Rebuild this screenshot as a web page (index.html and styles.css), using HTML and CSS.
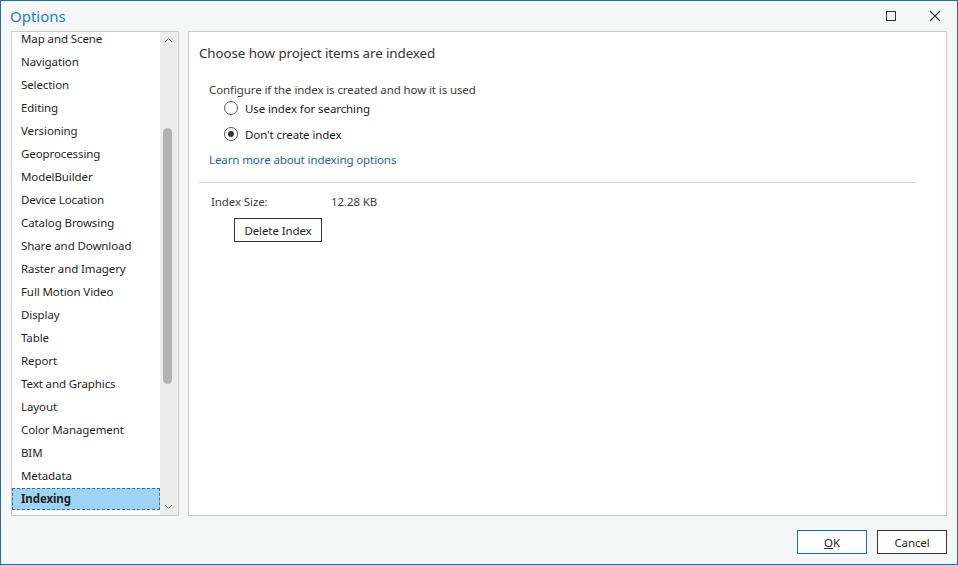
FILE: index.html
```html
<!DOCTYPE html>
<html lang="en">
<head>
    <meta charset="UTF-8">
    <title>Options</title>
    <link rel="stylesheet" href="styles.css">
</head>
<body>
    <div class="dialog">
        <div class="title-bar">
            <div class="title">Options</div>
            <div class="win-btns">
                <span class="win-btn">
                    <svg width="12" height="12" viewBox="0 0 12 12"><rect x="1.5" y="1.5" width="9" height="9" fill="none" stroke="#333" stroke-width="1"/></svg>
                </span>
                <span class="win-btn">
                    <svg width="12" height="12" viewBox="0 0 12 12"><path d="M1 1 L11 11 M11 1 L1 11" stroke="#333" stroke-width="1.1"/></svg>
                </span>
            </div>
        </div>

        <div class="main">
            <div class="side-list">
                <ul class="items">
                    <li>Map and Scene</li>
                    <li>Navigation</li>
                    <li>Selection</li>
                    <li>Editing</li>
                    <li>Versioning</li>
                    <li>Geoprocessing</li>
                    <li>ModelBuilder</li>
                    <li>Device Location</li>
                    <li>Catalog Browsing</li>
                    <li>Share and Download</li>
                    <li>Raster and Imagery</li>
                    <li>Full Motion Video</li>
                    <li>Display</li>
                    <li>Table</li>
                    <li>Report</li>
                    <li>Text and Graphics</li>
                    <li>Layout</li>
                    <li>Color Management</li>
                    <li>BIM</li>
                    <li>Metadata</li>
                    <li class="selected"><span>Indexing</span></li>
                </ul>
                <div class="scrollbar">
                    <svg class="arrow-up" width="9" height="6" viewBox="0 0 9 6"><path d="M1 5 L4.5 1.5 L8 5" fill="none" stroke="#7a7a7a" stroke-width="1"/></svg>
                    <div class="thumb"></div>
                    <svg class="arrow-down" width="9" height="6" viewBox="0 0 9 6"><path d="M1 1 L4.5 4.5 L8 1" fill="none" stroke="#7a7a7a" stroke-width="1"/></svg>
                </div>
            </div>

            <div class="panel">
                <h2>Choose how project items are indexed</h2>
                <div class="group">
                    <div class="group-label">Configure if the index is created and how it is used</div>
                    <label class="radio"><span class="circle"></span>Use index for searching</label>
                    <label class="radio checked"><span class="circle"></span>Don't create index</label>
                    <a class="link" href="#">Learn more about indexing options</a>
                </div>
                <div class="divider"></div>
                <div class="size-row">
                    <span class="size-label">Index Size:</span>
                    <span>12.28 KB</span>
                </div>
                <button class="btn delete-btn">Delete Index</button>
            </div>
        </div>

        <div class="footer">
            <button class="btn ok-btn"><u>O</u>K</button>
            <button class="btn">Cancel</button>
        </div>
    </div>
</body>
</html>
```

FILE: styles.css
```css
body {
    margin: 0;
    font-family: 'Noto Sans', 'Open Sans', sans-serif;
    font-size: 11.5px;
    letter-spacing: -0.1px;
    color: #1f1f1f;
}
.dialog {
    width: 958px;
    height: 565px;
    box-sizing: border-box;
    border: 1px solid #1b6cb3;
    background: #f5f6f6;
    display: flex;
    flex-direction: column;
}
.title-bar {
    height: 30px;
    display: flex;
    align-items: center;
    justify-content: space-between;
    padding-left: 9px;
}
.title {
    font-size: 15px;
    letter-spacing: 0;
    color: #1f7bd0;
    margin-top: -1px;
}
.win-btns {
    display: flex;
    margin-right: 16px;
    gap: 32px;
}
.win-btn {
    display: flex;
    width: 12px;
    height: 12px;
    margin-top: -1px;
}
.main {
    flex: 1;
    display: flex;
    gap: 9px;
    padding: 0 10px 0 10px;
    min-height: 0;
}
.side-list {
    width: 168px;
    box-sizing: border-box;
    border: 1px solid #cbcbcb;
    background: #fff;
    display: flex;
    overflow: hidden;
}
.items {
    list-style: none;
    margin: -5px 0 0 0;
    padding: 0;
    flex: 1;
}
.items li {
    height: 23px;
    box-sizing: border-box;
    padding: 1px 0 0 9px;
    line-height: 22px;
    white-space: nowrap;
}
.items li.selected {
    background: #9fd3f5;
    font-weight: bold;
    padding: 0;
    height: 22px;
    margin-top: 1px;
}
.items li.selected span {
    display: block;
    height: 20px;
    line-height: 20px;
    padding-left: 8px;
    border: 1px dashed #3d6d8e;
}
.scrollbar {
    width: 17px;
    background: #ececec;
    position: relative;
    border-right: 1px solid #f2f2f2;
}
.arrow-up {
    position: absolute;
    left: 4px;
    top: 5px;
}
.arrow-down {
    position: absolute;
    left: 4px;
    bottom: 5px;
}
.thumb {
    position: absolute;
    left: 3px;
    top: 96px;
    width: 9px;
    height: 256px;
    border-radius: 5px;
    background: #b3b3b3;
}
.panel {
    flex: 1;
    box-sizing: border-box;
    border: 1px solid #cbcbcb;
    background: #fff;
    padding: 10px 30px 0 10px;
}
h2 {
    font-size: 13.4px;
    font-weight: normal;
    color: #333;
    margin: 2px 0 0 0;
    line-height: 18px;
}
.group {
    padding-left: 10px;
    margin-top: 20px;
}
.group-label {
    color: #3c3c3c;
    line-height: 16px;
}
.radio {
    display: flex;
    align-items: center;
    height: 20px;
    margin-left: 15px;
    color: #1c1c1c;
}
.radio + .radio {
    margin-top: 6px;
}
.circle {
    width: 12px;
    height: 12px;
    border: 1px solid #5a5a5a;
    border-radius: 50%;
    margin-right: 7px;
    box-sizing: content-box;
    position: relative;
}
.radio.checked .circle::after {
    content: '';
    position: absolute;
    left: 3px;
    top: 3px;
    width: 6px;
    height: 6px;
    border-radius: 50%;
    background: #333;
}
.link {
    display: block;
    margin-top: 8px;
    color: #1b5fae;
    text-decoration: none;
    line-height: 16px;
}
.divider {
    height: 1px;
    background: #d0d0d0;
    margin-top: 14px;
}
.size-row {
    display: flex;
    margin: 11px 0 0 12px;
    line-height: 16px;
    color: #3c3c3c;
}
.size-label {
    width: 120px;
}
.btn {
    font-family: inherit;
    font-size: 11.5px;
    letter-spacing: -0.1px;
    color: #262626;
    background: #fff;
    border: 1px solid #333;
    height: 24px;
    padding: 0;
    cursor: pointer;
}
.delete-btn {
    width: 88px;
    margin: 8px 0 0 35px;
}
.footer {
    height: 48px;
    display: flex;
    justify-content: flex-end;
    gap: 10px;
    padding: 14px 10px 0 0;
    box-sizing: border-box;
}
.footer .btn {
    width: 70px;
}
.ok-btn {
    border-color: #0a72d0;
}
```
